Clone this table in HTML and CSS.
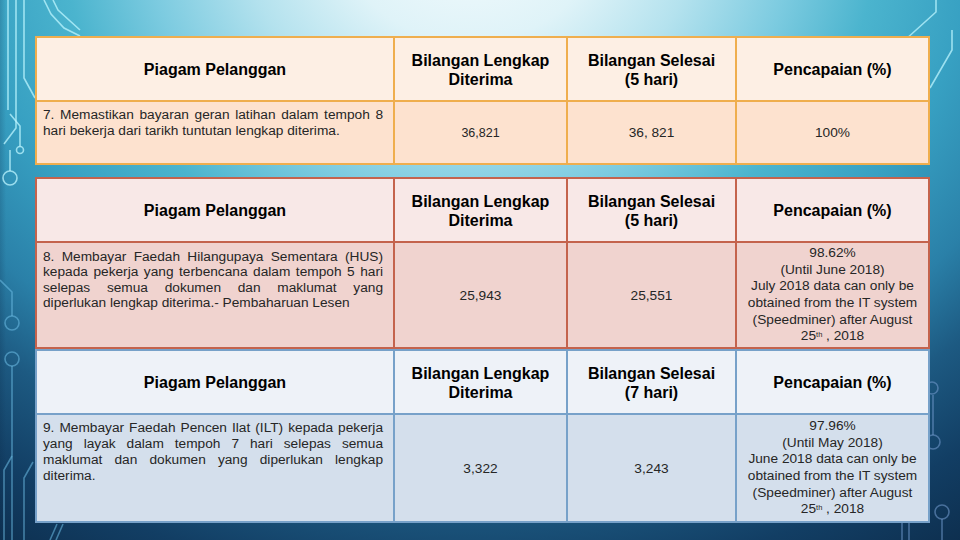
FILE: index.html
```html
<!DOCTYPE html>
<html lang="ms">
<head>
<meta charset="utf-8">
<title>Piagam Pelanggan</title>
<link rel="stylesheet" href="styles.css">
</head>
<body>
<div class="slide">
  <svg class="circuit" width="960" height="540" viewBox="0 0 960 540" aria-hidden="true">
    <g class="trace-light">
      <path d="M8,0 V110"/>
      <path d="M16,0 V128 L4,144"/>
      <path d="M24,0 V78 L35,98"/>
      <path d="M44,0 L51,14 L64,28 L80,36"/>
      <path d="M53,0 L58,10 L80,30"/>
      <path d="M20,146.5 V126 L10,114"/>
      <circle cx="20" cy="150" r="3.5"/>
      <path d="M10,171 V150"/>
      <circle cx="10" cy="178" r="7"/>
      <path d="M936,0 V12 L905,40"/>
      <path d="M952,30 V50 L930,88"/>
    </g>
    <g class="trace-mid">
      <path d="M0,280 L12,292 V316"/>
      <circle cx="12" cy="323" r="7"/>
      <circle cx="12" cy="359" r="7"/>
      <path d="M12,366 V540"/>
      <path d="M4,540 V470 L12,456"/>
      <path d="M24,540 V478 L33,462"/>
      <path d="M50,540 L57,524"/>
      <path d="M56,540 L63,524"/>
    </g>
    <g class="trace-dark">
      <circle cx="932" cy="388" r="6"/>
      <path d="M933,395 V435"/>
      <circle cx="933" cy="442" r="7"/>
      <circle cx="942" cy="512" r="7"/>
      <path d="M942,519 V540"/>
      <path d="M902,523 V540"/>
      <path d="M909,523 V540"/>
    </g>
  </svg>

  <div class="tables">
    <table class="charter gold">
      <tr class="head">
        <th class="c1">Piagam Pelanggan</th>
        <th class="c2">Bilangan Lengkap<br>Diterima</th>
        <th class="c3">Bilangan Selesai<br>(5 hari)</th>
        <th class="c4">Pencapaian (%)</th>
      </tr>
      <tr class="body r1">
        <td class="desc">7. Memastikan bayaran geran latihan dalam tempoh 8 hari bekerja dari tarikh tuntutan lengkap diterima.</td>
        <td class="num small">36,821</td>
        <td class="num">36, 821</td>
        <td class="num">100%</td>
      </tr>
    </table>

    <table class="charter red">
      <tr class="head">
        <th class="c1">Piagam Pelanggan</th>
        <th class="c2">Bilangan Lengkap<br>Diterima</th>
        <th class="c3">Bilangan Selesai<br>(5 hari)</th>
        <th class="c4">Pencapaian (%)</th>
      </tr>
      <tr class="body r2">
        <td class="desc tight">8. Membayar Faedah Hilangupaya Sementara (HUS) kepada pekerja yang terbencana dalam tempoh 5 hari selepas semua dokumen dan maklumat yang diperlukan lengkap diterima.- Pembaharuan Lesen</td>
        <td class="num">25,943</td>
        <td class="num">25,551</td>
        <td class="note">98.62%<br>(Until June 2018)<br>July 2018 data can only be<br>obtained from the IT system<br>(Speedminer) after August<br>25<sup>th</sup> , 2018</td>
      </tr>
    </table>

    <table class="charter blue">
      <tr class="head">
        <th class="c1">Piagam Pelanggan</th>
        <th class="c2">Bilangan Lengkap<br>Diterima</th>
        <th class="c3">Bilangan Selesai<br>(7 hari)</th>
        <th class="c4">Pencapaian (%)</th>
      </tr>
      <tr class="body r3">
        <td class="desc">9. Membayar Faedah Pencen Ilat (ILT) kepada pekerja yang layak dalam tempoh 7 hari selepas semua maklumat dan dokumen yang diperlukan lengkap diterima.</td>
        <td class="num">3,322</td>
        <td class="num">3,243</td>
        <td class="note">97.96%<br>(Until May 2018)<br>June 2018 data can only be<br>obtained from the IT system<br>(Speedminer) after August<br>25<sup>th</sup> , 2018</td>
      </tr>
    </table>
  </div>
</div>
</body>
</html>
```

FILE: styles.css
```css
* { box-sizing: border-box; }

html, body {
  margin: 0;
  padding: 0;
  background: #0b2744;
}

.slide {
  position: relative;
  width: 960px;
  height: 540px;
  overflow: hidden;
  font-family: "Liberation Sans", Arial, sans-serif;
  background:
    linear-gradient(90deg, rgba(10,40,70,0.18) 0px, rgba(10,40,70,0) 6px),
    radial-gradient(ellipse 700px 560px at 470px -60px,
      #f4fbfd 0%, #dff3f8 18%, #b4e2ee 32%, #7ccbe0 46%, #4bb4ce 58%,
      #37a0c2 72%, #2a80a8 88%, #1d5a82 100%, #123e64 115%, #0b2744 135%);
}

.circuit {
  position: absolute;
  left: 0;
  top: 0;
  z-index: 0;
}

.circuit path,
.circuit circle {
  fill: none;
  stroke-width: 1.6;
}

.trace-light { stroke: rgba(190, 245, 255, 0.75); }
.trace-mid { stroke: rgba(110, 190, 230, 0.55); }
.trace-dark { stroke: rgba(110, 150, 200, 0.6); }

.tables {
  position: relative;
  z-index: 1;
  display: flex;
  flex-direction: column;
  align-items: flex-start;
  padding: 36px 0 0 35px;
}

.charter {
  border-collapse: separate;
  border-spacing: 0;
  table-layout: fixed;
  width: 895px;
  border-top: 2px solid;
  border-left: 2px solid;
}

.charter.gold { margin-bottom: 12px; }

.charter th,
.charter td {
  border-right: 2px solid;
  border-bottom: 2px solid;
  padding: 0;
}

.c1 { width: 358px; }
.c2 { width: 173px; }
.c3 { width: 169px; }
.c4 { width: 193px; }

.head th {
  height: 64px;
  padding-top: 2px;
  font-size: 16px;
  font-weight: bold;
  line-height: 19.5px;
  color: #000;
  text-align: center;
  vertical-align: middle;
}

.body td {
  color: #262626;
  font-size: 13.7px;
}

.r1 td { height: 63px; }
.r2 td { height: 106px; }
.r3 td { height: 108px; }

.desc {
  vertical-align: top;
  text-align: justify;
  line-height: 16px;
  padding: 5px 10px 0 6px !important;
}

.desc.tight { line-height: 15.3px; padding-top: 6px !important; }

.num {
  text-align: center;
  vertical-align: middle;
  font-size: 13.7px;
}

.num.small { font-size: 12.5px; }

.note {
  text-align: center;
  vertical-align: middle;
  line-height: 16.7px;
  padding: 0 5px !important;
  white-space: nowrap;
}

.note sup {
  font-size: 7.5px;
  line-height: 0;
  vertical-align: 3px;
}

/* Gold table */
.gold, .gold th, .gold td { border-color: #efae4e; }
.gold .head th { background: #fdefe4; }
.gold .body td { background: #fde2cf; }

/* Red table */
.red, .red th, .red td { border-color: #c4634d; }
.red .head th { background: #f8e8e7; }
.red .body td { background: #f0d3cf; }

/* Blue table */
.blue, .blue th, .blue td { border-color: #77a1c9; }
.blue .head th { background: #eef2f8; }
.blue .body td { background: #d4dfec; }
```
